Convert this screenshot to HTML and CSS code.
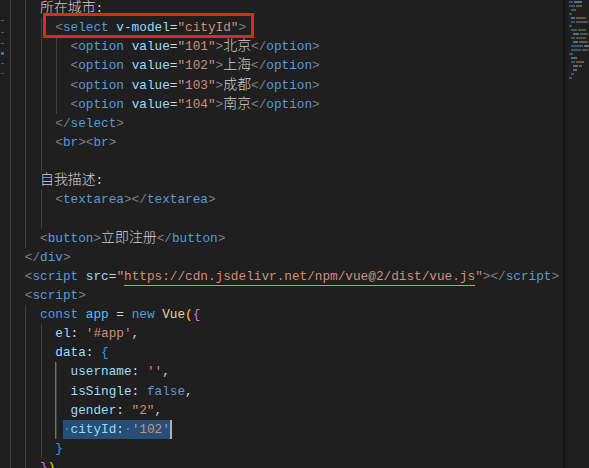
FILE: index.html
```html
<!DOCTYPE html>
<html lang="zh-CN">
<head>
<meta charset="utf-8">
<title>editor</title>
<link rel="stylesheet" href="styles.css">
</head>
<body>
<div class="screen">
  <div class="gutter">
    <i class="gm g1"></i><i class="gm g2"></i><i class="gm g3"></i><i class="gm gb"></i><i class="gm g4"></i><i class="gm g5"></i>
  </div>
  <div class="editor">
    <div class="code">
<div class="ln i4"><span class="cjk">所在城市</span>:</div>
<div class="ln i6"><span class="p">&lt;</span><span class="tg">select</span> <span class="at">v-model</span>=<span class="st">"cityId"</span><span class="p">&gt;</span></div>
<div class="ln i8"><span class="p">&lt;</span><span class="tg">option</span> <span class="at">value</span>=<span class="st">"101"</span><span class="p">&gt;</span><span class="cjk">北京</span><span class="p">&lt;/</span><span class="tg">option</span><span class="p">&gt;</span></div>
<div class="ln i8"><span class="p">&lt;</span><span class="tg">option</span> <span class="at">value</span>=<span class="st">"102"</span><span class="p">&gt;</span><span class="cjk">上海</span><span class="p">&lt;/</span><span class="tg">option</span><span class="p">&gt;</span></div>
<div class="ln i8"><span class="p">&lt;</span><span class="tg">option</span> <span class="at">value</span>=<span class="st">"103"</span><span class="p">&gt;</span><span class="cjk">成都</span><span class="p">&lt;/</span><span class="tg">option</span><span class="p">&gt;</span></div>
<div class="ln i8"><span class="p">&lt;</span><span class="tg">option</span> <span class="at">value</span>=<span class="st">"104"</span><span class="p">&gt;</span><span class="cjk">南京</span><span class="p">&lt;/</span><span class="tg">option</span><span class="p">&gt;</span></div>
<div class="ln i6"><span class="p">&lt;/</span><span class="tg">select</span><span class="p">&gt;</span></div>
<div class="ln i6"><span class="p">&lt;</span><span class="tg">br</span><span class="p">&gt;&lt;</span><span class="tg">br</span><span class="p">&gt;</span></div>
<div class="ln i6"></div>
<div class="ln i4"><span class="cjk">自我描述</span>:</div>
<div class="ln i6"><span class="p">&lt;</span><span class="tg">textarea</span><span class="p">&gt;&lt;/</span><span class="tg">textarea</span><span class="p">&gt;</span></div>
<div class="ln i6"></div>
<div class="ln i4"><span class="p">&lt;</span><span class="tg">button</span><span class="p">&gt;</span><span class="cjk">立即注册</span><span class="p">&lt;/</span><span class="tg">button</span><span class="p">&gt;</span></div>
<div class="ln i2"><span class="p">&lt;/</span><span class="tg">div</span><span class="p">&gt;</span></div>
<div class="ln i2"><span class="p">&lt;</span><span class="tg">script</span> <span class="at">src</span>=<span class="st">"<span class="u">https://cdn.jsdelivr.net/npm/vue@2/dist/vue.js</span>"</span><span class="p">&gt;&lt;/</span><span class="tg">script</span><span class="p">&gt;</span></div>
<div class="ln i2"><span class="p">&lt;</span><span class="tg">script</span><span class="p">&gt;</span></div>
<div class="ln i4"><span class="kw">const</span> <span class="cv">app</span> = <span class="kw">new</span> <span class="fn">Vue</span><span class="b1">(</span><span class="b2">{</span></div>
<div class="ln i6"><span class="at">el</span>: <span class="st">'#app'</span>,</div>
<div class="ln i6"><span class="at">data</span>: <span class="b3">{</span></div>
<div class="ln i8 act"><span class="at">username</span>: <span class="st">''</span>,</div>
<div class="ln i8 act"><span class="at">isSingle</span>: <span class="kw">false</span>,</div>
<div class="ln i8 act"><span class="at">gender</span>: <span class="st">"2"</span>,</div>
<div class="ln i7 act"><span class="sel"><span class="ws">·</span><span class="at">cityId</span>:<span class="ws">·</span><span class="st">'102'</span></span><span class="cur"></span></div>
<div class="ln i6"><span class="b3">}</span></div>
<div class="ln i4"><span class="b2">}</span><span class="b1">)</span></div>
    </div>
  </div>
  <div class="minimap">
    <div class="mr"><i class="mb c1 w4"></i><i class="mb c2 w8"></i></div>
    <div class="mr"><i class="mb c1 w6"></i><i class="mb c3 w6"></i></div>
    <div class="mr ind1"><i class="mb c4 w5"></i></div>
    <div class="mr"><i class="mb c1 w3"></i></div>
    <div class="mr ind1"><i class="mb c2 w4"></i><i class="mb c3 w10"></i></div>
    <div class="mr ind1"><i class="mb c1 w4"></i><i class="mb c4 w12"></i></div>
    <div class="mr"><i class="mb c1 w3"></i></div>
    <div class="mr ind1"><i class="mb c5 w6"></i><i class="mb c5 w8"></i></div>
    <div class="mr ind2"><i class="mb c2 w6"></i><i class="mb c4 w8"></i></div>
    <div class="mr ind1"><i class="mb c5 w4"></i><i class="mb c5 w10"></i></div>
    <div class="mr ind2"><i class="mb c2 w5"></i><i class="mb c3 w9"></i></div>
    <div class="mr ind1"><i class="mb c1 w12"></i><i class="mb c2 w5"></i></div>
    <div class="mr ind1"><i class="mb c1 w10"></i><i class="mb c4 w6"></i></div>
    <div class="mr"><i class="mb c4 w4"></i></div>
    <div class="mr ind1"><i class="mb c2 w6"></i></div>
    <div class="mr ind1"><i class="mb c1 w4"></i><i class="mb c3 w8"></i></div>
    <div class="mr ind2"><i class="mb c2 w5"></i><i class="mb c3 w3"></i></div>
    <div class="mr ind2"><i class="mb c2 w4"></i></div>
    <div class="mr ind1"><i class="mb c1 w3"></i></div>
    <div class="mr"><i class="mb c1 w3"></i></div>
  </div>
  <div class="annot"></div>
</div>
</body>
</html>
```

FILE: styles.css
```css
* { box-sizing: border-box; }

html, body {
  margin: 0;
  padding: 0;
  background: #1f1f1f;
  overflow: hidden;
}

.screen {
  position: relative;
  display: flex;
  width: 589px;
  height: 468px;
  background: #1f1f1f;
  overflow: hidden;
}

/* left strip */
.gutter {
  flex: none;
  width: 9.5px;
  display: flex;
  flex-direction: column;
  align-items: flex-start;
  padding: 20px 0 0 1px;
}
.gm {
  display: block;
  width: 3px;
  height: 1px;
  background: #5a5a5a;
}
.g1 { margin-bottom: 11px; }
.g2 { margin-bottom: 10px; }
.g3 { margin-bottom: 8px; }
.gb { height: 3px; background: #3f6f9e; margin-bottom: 8px; }
.g4 { margin-bottom: 9px; }
.g5 { background: #3b5570; }

/* editor */
.editor {
  flex: 1;
  min-width: 0;
  overflow: hidden;
}

.code {
  margin-top: -1px;
  font-family: "Liberation Mono", "Noto Sans CJK SC", monospace;
  font-size: 12.73px;
  color: #d4d4d4;
}

.ln {
  height: 19.125px;
  line-height: 19.125px;
  white-space: pre;
  background-image: repeating-linear-gradient(to right, #404040 0 1px, transparent 1px 2ch);
  background-repeat: no-repeat;
  background-size: 0 100%;
}
.i2 { padding-left: 2ch; background-size: 2ch 100%; }
.i4 { padding-left: 4ch; background-size: 4ch 100%; }
.i6 { padding-left: 6ch; background-size: 6ch 100%; }
.i7 { padding-left: 7ch; background-size: 7ch 100%; }
.i8 { padding-left: 8ch; background-size: 8ch 100%; }

.act {
  background-image:
    linear-gradient(to right, #707070 0 1px, transparent 1px),
    repeating-linear-gradient(to right, #404040 0 1px, transparent 1px 2ch);
  background-position: 6ch 0, 0 0;
  background-size: 1px 100%, 6.5ch 100%;
  background-repeat: no-repeat;
}

.cjk {
  font-family: "Noto Sans CJK SC", sans-serif;
  font-size: 13.9px;
  font-weight: 300;
  line-height: 1;
  color: #cfcfcf;
}

.p  { color: #808080; }
.tg { color: #569cd6; }
.at { color: #9cdcfe; }
.st { color: #ce9178; }
.kw { color: #569cd6; }
.cv { color: #4fc1ff; }
.fn { color: #dcdcaa; }
.b1 { color: #ffd700; }
.b2 { color: #da70d6; }
.b3 { color: #179fff; }

.u {
  text-decoration: underline;
  text-decoration-thickness: 1px;
  text-underline-offset: 5px;
}

.sel {
  display: inline-block;
  height: 19.125px;
  vertical-align: top;
  background: #264f78;
}
.ws { color: rgba(227, 228, 226, 0.4); }

.cur {
  display: inline-block;
  width: 2px;
  height: 19.125px;
  vertical-align: top;
  background: #aeafad;
}

/* minimap */
.minimap {
  flex: none;
  width: 26px;
  border-left: 1px solid #141414;
  box-shadow: inset 2px 0 2px -1px rgba(0, 0, 0, 0.5);
  padding: 1px 0 0 5px;
  display: flex;
  flex-direction: column;
  gap: 2px;
}
.mr {
  display: flex;
  gap: 1px;
  height: 2px;
}
.ind1 { padding-left: 2px; }
.ind2 { padding-left: 4px; }
.mb {
  display: block;
  height: 2px;
  opacity: 0.7;
}
.c1 { background: #3d6d9c; }
.c2 { background: #6f8fa8; }
.c3 { background: #8a6b55; }
.c4 { background: #6a6a6a; }
.c5 { background: #4e7a3e; }
.w3 { width: 3px; }
.w4 { width: 4px; }
.w5 { width: 5px; }
.w6 { width: 6px; }
.w8 { width: 8px; }
.w9 { width: 9px; }
.w10 { width: 10px; }
.w12 { width: 12px; }

/* red annotation box */
.annot {
  position: absolute;
  left: 43px;
  top: 13px;
  width: 211px;
  height: 25px;
  border: 3px solid #e3261c;
}
```
